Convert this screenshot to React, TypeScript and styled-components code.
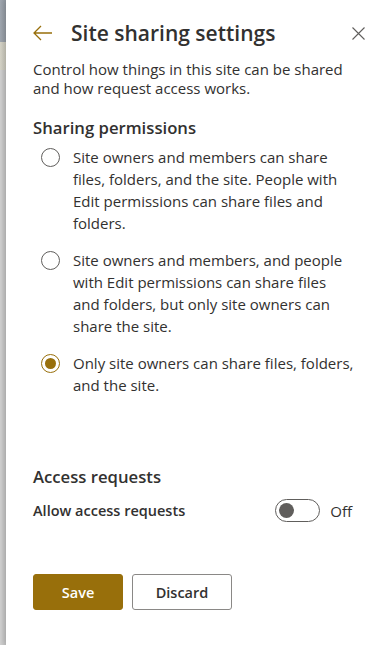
import React, { useState } from "react";
import styled, { createGlobalStyle } from "styled-components";

const Global = createGlobalStyle`
  html, body { margin: 0; padding: 0; background: #fff; }
  body {
    font-family: "Segoe UI", "Open Sans", "Noto Sans", sans-serif;
    color: #323130;
    -webkit-font-smoothing: antialiased;
  }
`;

const gold = "#986f0b";

const Page = styled.div`
  display: flex;
  width: 378px;
  height: 645px;
  overflow: hidden;
`;

const Backdrop = styled.div`
  width: 6px;
  flex-shrink: 0;
  display: flex;
  flex-direction: column;
  background: linear-gradient(to right, #d2d2d2, #bdbdbd);
`;

const BackdropBand = styled.div<{ $h: number; $c: string }>`
  height: ${(p) => p.$h}px;
  background: ${(p) => p.$c};
  flex-shrink: 0;
`;

const Panel = styled.div`
  flex: 1;
  display: flex;
  flex-direction: column;
  padding: 0 0 0 27px;
  background: #fff;
  box-shadow: -2px 0 6px rgba(0, 0, 0, 0.12);
`;

const Header = styled.div`
  display: flex;
  align-items: center;
  height: 40px;
  margin-top: 13px;
  padding-right: 8px;
`;

const BackButton = styled.button`
  border: 0;
  background: none;
  padding: 0;
  width: 38px;
  height: 32px;
  display: flex;
  align-items: center;
  cursor: pointer;
`;

const Title = styled.h1`
  flex: 1;
  margin: 0;
  font-size: 21px;
  font-weight: 600;
  line-height: 28px;
  color: #323130;
`;

const CloseButton = styled.button`
  border: 0;
  background: none;
  padding: 0;
  width: 24px;
  height: 24px;
  display: flex;
  align-items: center;
  justify-content: center;
  cursor: pointer;
`;

const Description = styled.p`
  margin: 7px 0 0;
  font-size: 15px;
  line-height: 19px;
  color: #323130;
  padding-right: 20px;
`;

const SectionTitle = styled.h2<{ $top: number }>`
  margin: ${(p) => p.$top}px 0 0;
  font-size: 16.7px;
  font-weight: 600;
  line-height: 24px;
  color: #323130;
`;

const Options = styled.div`
  display: flex;
  flex-direction: column;
  gap: 15px;
  margin-top: 6px;
  padding-left: 8px;
  padding-right: 22px;
`;

const Option = styled.label`
  display: flex;
  align-items: flex-start;
  gap: 13px;
  cursor: pointer;
`;

const Radio = styled.span<{ $checked: boolean }>`
  width: 19px;
  height: 19px;
  margin-top: 2px;
  flex-shrink: 0;
  border-radius: 50%;
  box-sizing: border-box;
  border: 1px solid ${(p) => (p.$checked ? gold : "#605e5c")};
  display: flex;
  align-items: center;
  justify-content: center;
  &::after {
    content: "";
    width: 11px;
    height: 11px;
    border-radius: 50%;
    background: ${(p) => (p.$checked ? gold : "transparent")};
  }
`;

const OptionText = styled.span`
  font-size: 15px;
  line-height: 22px;
  color: #323130;
`;

const ToggleRow = styled.div`
  display: flex;
  align-items: center;
  margin-top: 10px;
  padding-right: 26px;
`;

const ToggleLabel = styled.span`
  flex: 1;
  font-size: 14.5px;
  font-weight: 600;
  line-height: 22px;
`;

const Toggle = styled.button<{ $on: boolean }>`
  width: 45px;
  height: 23px;
  border-radius: 12px;
  box-sizing: border-box;
  border: 1px solid #605e5c;
  background: ${(p) => (p.$on ? gold : "#fff")};
  padding: 0 3px;
  display: flex;
  align-items: center;
  justify-content: ${(p) => (p.$on ? "flex-end" : "flex-start")};
  cursor: pointer;
  &::after {
    content: "";
    width: 15px;
    height: 15px;
    border-radius: 50%;
    background: ${(p) => (p.$on ? "#fff" : "#605e5c")};
  }
`;

const ToggleState = styled.span`
  margin-left: 10px;
  font-size: 15px;
  line-height: 22px;
`;

const Actions = styled.div`
  display: flex;
  gap: 9px;
  margin-top: 52px;
`;

const Btn = styled.button<{ $primary?: boolean }>`
  height: 36px;
  min-width: ${(p) => (p.$primary ? 90 : 100)}px;
  box-sizing: border-box;
  border-radius: 3px;
  font-family: inherit;
  font-size: 14.5px;
  font-weight: 600;
  border: 1px solid ${(p) => (p.$primary ? gold : "#8a8886")};
  background: ${(p) => (p.$primary ? gold : "#fff")};
  color: ${(p) => (p.$primary ? "#fff" : "#323130")};
  cursor: pointer;
`;

const options = [
  "Site owners and members can share files, folders, and the site. People with Edit permissions can share files and folders.",
  "Site owners and members, and people with Edit permissions can share files and folders, but only site owners can share the site.",
  "Only site owners can share files, folders, and the site.",
];

export default function App() {
  const [selected, setSelected] = useState(2);
  const [allow, setAllow] = useState(false);

  return (
    <>
      <Global />
      <Page>
        <Backdrop>
          <BackdropBand $h={42} $c="linear-gradient(to right, #a0a7b0, #8f969e)" />
          <BackdropBand $h={28} $c="linear-gradient(to right, #d6d4c8, #c4c2b6)" />
        </Backdrop>
        <Panel>
          <Header>
            <BackButton aria-label="Back">
              <svg width="20" height="16" viewBox="0 0 20 16" fill="none">
                <path d="M8 1 1 8l7 7M1 8h18" stroke={gold} strokeWidth="1.3" />
              </svg>
            </BackButton>
            <Title>Site sharing settings</Title>
            <CloseButton aria-label="Close">
              <svg width="13" height="13" viewBox="0 0 13 13">
                <path d="M.5.5l12 12M12.5.5l-12 12" stroke="#605e5c" strokeWidth="1.1" />
              </svg>
            </CloseButton>
          </Header>
          <Description>
            Control how things in this site can be shared and how request access works.
          </Description>

          <SectionTitle $top={18}>Sharing permissions</SectionTitle>
          <Options>
            {options.map((text, i) => (
              <Option key={i} onClick={() => setSelected(i)}>
                <Radio $checked={selected === i} />
                <OptionText>{text}</OptionText>
              </Option>
            ))}
          </Options>

          <SectionTitle $top={69}>Access requests</SectionTitle>
          <ToggleRow>
            <ToggleLabel>Allow access requests</ToggleLabel>
            <Toggle $on={allow} onClick={() => setAllow(!allow)} aria-label="Allow access requests" />
            <ToggleState>{allow ? "On" : "Off"}</ToggleState>
          </ToggleRow>

          <Actions>
            <Btn $primary>Save</Btn>
            <Btn>Discard</Btn>
          </Actions>
        </Panel>
      </Page>
    </>
  );
}
